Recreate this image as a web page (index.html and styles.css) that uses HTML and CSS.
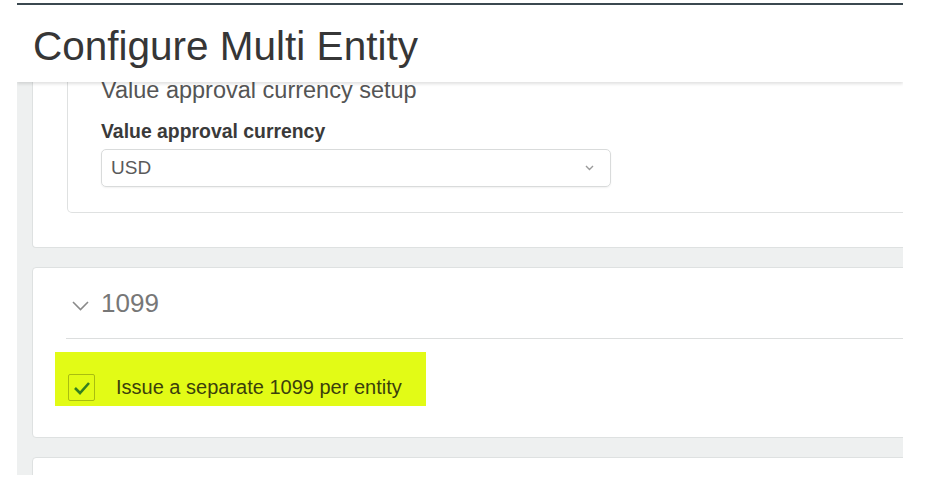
FILE: index.html
```html
<!DOCTYPE html>
<html lang="en">
  <head>
    <meta charset="UTF-8" />
    <meta name="viewport" content="width=device-width, initial-scale=1.0" />
    <title>Configure Multi Entity</title>
    <link rel="stylesheet" href="styles.css">
  </head>
  <body>
    <div class="app">
      <div class="header">
        <h1>Configure Multi Entity</h1>
      </div>

      <div class="content">
        <div class="card card-first">
          <div class="sub-card">
            <div class="sub-title">Value approval currency setup</div>
            <label class="field-label" for="currency">Value approval currency</label>
            <div class="select">
              <span class="select-value">USD</span>
              <svg class="select-arrow" width="9" height="6" viewBox="0 0 9 6">
                <path d="M1 1 L4.5 4.5 L8 1" fill="none" stroke="#9a9a9a" stroke-width="1.4" />
              </svg>
            </div>
          </div>
        </div>

        <div class="card card-1099">
          <div class="section-head">
            <svg class="section-chevron" width="17" height="10" viewBox="0 0 17 10">
              <path d="M1 1 L8.5 8.5 L16 1" fill="none" stroke="#8a8a8a" stroke-width="1.6" />
            </svg>
            <span class="section-title">1099</span>
          </div>

          <div class="check-row">
            <span class="check-box">
              <svg width="18" height="14" viewBox="0 0 18 14">
                <path d="M2 7 L7 12 L16 2" fill="none" stroke="#35801f" stroke-width="2.6" />
              </svg>
            </span>
            <span class="check-label">Issue a separate 1099 per entity</span>
          </div>
        </div>

        <div class="card card-last"></div>
      </div>
    </div>
  </body>
</html>
```

FILE: styles.css
```css
body {
  margin: 0;
  background-color: white;
  font-family: "Liberation Sans", Arial, sans-serif;
}

.app {
  margin: 3px 0 0 17px;
  width: 886px;
  height: 470px;
  border-top: 2px solid #3b4850;
  background-color: #eef0f0;
  display: flex;
  flex-direction: column;
  overflow: hidden;
}

.header {
  flex-shrink: 0;
  background-color: white;
  height: 77px;
  padding-left: 16px;
  box-shadow: 0 2px 3px rgba(0, 0, 0, 0.12);
  position: relative;
  z-index: 1;
}

h1 {
  margin: 0;
  padding-top: 18px;
  font-size: 40.5px;
  font-weight: normal;
  line-height: 46px;
  color: #363636;
}

.content {
  flex-shrink: 0;
  padding-left: 15px;
  display: flex;
  flex-direction: column;
  gap: 19px;
}

.card {
  flex-shrink: 0;
  background-color: white;
  border: 1px solid #dee1e1;
  border-radius: 4px;
  margin-right: -10px;
}

.card-first {
  border-top: none;
  border-radius: 0 0 4px 4px;
  padding: 0 0 34px 34px;
}

.sub-card {
  border: 1px solid #dfe1e1;
  border-top: none;
  border-radius: 0 0 5px 5px;
  padding: 0 0 25px 33px;
}

.sub-title {
  margin-top: -3px;
  font-size: 23.5px;
  line-height: 22px;
  color: #555;
}

.field-label {
  display: block;
  margin-top: 19px;
  margin-bottom: 7px;
  font-size: 19.4px;
  font-weight: bold;
  line-height: 22px;
  color: #3a3a3a;
}

.select {
  width: 510px;
  height: 38px;
  box-sizing: border-box;
  border: 1px solid #d9dbdb;
  border-radius: 5px;
  box-shadow: 0 1px 2px rgba(0, 0, 0, 0.06);
  display: flex;
  align-items: center;
  justify-content: space-between;
  padding: 0 16px 0 9px;
}

.select-value {
  font-size: 19px;
  color: #5a5a5a;
}

.card-1099 {
  padding: 20px 0 31px 33px;
}

.section-head {
  display: flex;
  align-items: center;
  gap: 12px;
  height: 30px;
  padding: 0 0 20px 6px;
  border-bottom: 1px solid #dcdede;
}

.section-chevron {
  margin-top: 5px;
}

.section-title {
  font-size: 26px;
  line-height: 30px;
  color: #777;
}

.check-row {
  display: flex;
  align-items: center;
  gap: 21px;
  width: max-content;
  margin: 13px 0 0 -11px;
  padding: 22px 24px 5px 13px;
  background-color: #e2fb16;
}

.check-box {
  width: 27px;
  height: 27px;
  box-sizing: border-box;
  border: 1px solid #a9bd10;
  border-radius: 2px;
  display: flex;
  align-items: center;
  justify-content: center;
}

.check-label {
  font-size: 20px;
  color: #3b3f0c;
}

.card-last {
  height: 40px;
}
```
